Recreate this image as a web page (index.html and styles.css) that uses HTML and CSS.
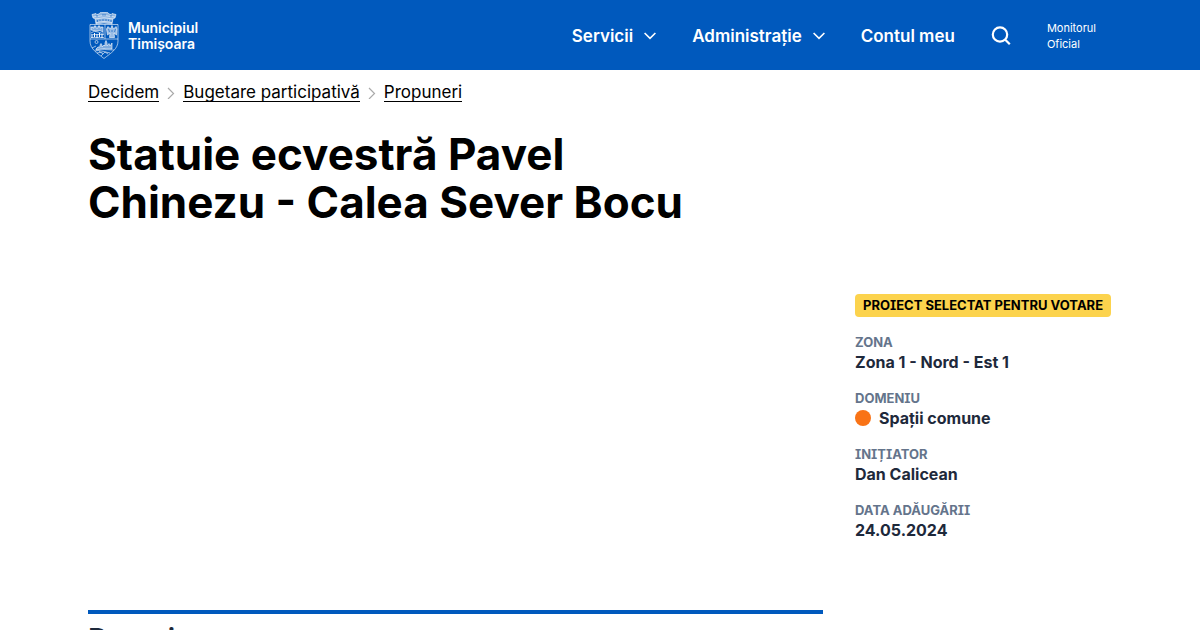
FILE: index.html
```html
<!DOCTYPE html>
<html lang="ro">

<head>
    <meta charset="utf-8">
    <meta name="viewport" content="width=device-width, initial-scale=1">
    <title>Statuie ecvestră Pavel Chinezu - Calea Sever Bocu</title>
    <link rel="stylesheet" href="styles.css">
</head>

<body>
    <header class="site-header">
        <div class="container header-inner">
            <a class="brand" href="#">
                <svg class="crest" width="32" height="48" viewBox="0 0 32 48" fill="none" stroke="currentColor" stroke-width="0.6" aria-hidden="true">
                    <!-- mural crown -->
                    <path fill="currentColor" fill-opacity="0.55" d="M8 12 L7 6.500 L5 6 L4 2.500 L8 1.500 L9 2.500 L11 2 L12 .7 Q16 0 20 .7 L21 2 L23 2.500 L24 1.500 L28 2.500 L27 6 L25 6.500 L24 12 Q16 10 8 12Z" />
                    <path d="M5 5 Q16 2 27 5 M7 7 Q16 4.500 25 7 M8 10.500 Q16 8.500 24 10.500" />
                    <path stroke="#0059bd" d="M9.500 8 V10 M12 7.500 V9 M15 7 V9 M18 7 V9 M20.500 7.500 V9 M23 8 V10 M8 4 H10 M14 3 H18 M22 4 H24" />
                    <!-- shield -->
                    <path d="M2 12.500 H30 V29 C30 37 23 41 16 46.500 C9 41 2 37 2 29Z" />
                    <path d="M2 27 H30 M17 12.500 V27" />
                    <!-- fortress and bridge -->
                    <path fill="currentColor" fill-opacity="0.5" d="M3 18 V15 H5 V16 H6 V14 H8 V16 H10 V14 H12 V16 H13 V15 H15 V20 L12 18.500 L8 19 L3 18Z" />
                    <path d="M3 21 Q6 18 10 20 T16 21 M3 22.500 H16 M3 25.500 H16" />
                    <path stroke-width="1" d="M4 23 V26 M6.500 21 V25 M9 22 V26 M11.500 21 V25 M14 22 V26" />
                    <!-- winged figure -->
                    <path fill="currentColor" fill-opacity="0.6" d="M18.500 17 L20 14.500 L22.500 17 L24 13.500 L25.500 17 L28 14.500 L29 17 L28.500 23 L26 21 L26.500 25.500 H21.500 L22 21 L19.500 23Z" />
                    <path stroke="#0059bd" d="M20.500 17 L21.500 20 M27.500 17 L26.500 20 M24 18 V20" />
                    <!-- sun, town and river -->
                    <circle cx="8.500" cy="30" r="1.500" />
                    <path fill="currentColor" fill-opacity="0.5" d="M8 37 L10 35 H12 V33 L13 31.500 L14 33 V35 L16 33 L17 34 V31 L18 28.500 L19 31 V34 L21 31.500 L22 34 L24 31 V37 Q16 35.500 8 38Z" />
                    <path d="M4 36 L8 34 M7 39 Q16 36.500 26 38 M9 41 Q16 38 22 41 M13 44 L17 40 L20 42 M11 39 L15 42" />
                </svg>
                <span>Municipiul<br>Timișoara</span>
            </a>
            <nav class="main-nav">
                <button class="nav-item" type="button">Servicii
                    <svg width="12" height="8" viewBox="0 0 12 8" fill="none" stroke="currentColor" stroke-width="1.600" aria-hidden="true"><path d="M.6 1 L6 6.400 L11.400 1" /></svg>
                </button>
                <button class="nav-item" type="button">Administrație
                    <svg width="12" height="8" viewBox="0 0 12 8" fill="none" stroke="currentColor" stroke-width="1.600" aria-hidden="true"><path d="M.6 1 L6 6.400 L11.400 1" /></svg>
                </button>
                <a class="nav-item" href="#">Contul meu</a>
                <button class="nav-item" type="button" aria-label="Caută">
                    <svg width="20" height="20" viewBox="0 0 20 20" fill="none" stroke="currentColor" stroke-width="2.200" aria-hidden="true"><circle cx="9" cy="8.500" r="7.200" /><path d="M14 13.500 L18.800 18.300" /></svg>
                </button>
                <a class="monitor" href="#">Monitorul<br>Oficial</a>
            </nav>
        </div>
    </header>

    <div class="container">
        <nav class="breadcrumbs">
            <a href="#">Decidem</a>
            <svg width="8" height="12" viewBox="0 0 8 12" fill="none" stroke="currentColor" stroke-width="1.200" aria-hidden="true"><path d="M1 1 L6.500 6.500 L1 12" /></svg>
            <a href="#">Bugetare participativă</a>
            <svg width="8" height="12" viewBox="0 0 8 12" fill="none" stroke="currentColor" stroke-width="1.200" aria-hidden="true"><path d="M1 1 L6.500 6.500 L1 12" /></svg>
            <a href="#">Propuneri</a>
        </nav>

        <h1>Statuie ecvestră Pavel Chinezu - Calea Sever Bocu</h1>

        <div class="project">
            <main>
                <div class="map"></div>
                <section class="description">
                    <h2>Descriere</h2>
                </section>
            </main>
            <aside>
                <span class="badge">Proiect selectat pentru votare</span>
                <dl class="details">
                    <div>
                        <dt>Zona</dt>
                        <dd>Zona 1 - Nord - Est 1</dd>
                    </div>
                    <div>
                        <dt>Domeniu</dt>
                        <dd><span class="dot"></span>Spații comune</dd>
                    </div>
                    <div>
                        <dt>Inițiator</dt>
                        <dd>Dan Calicean</dd>
                    </div>
                    <div>
                        <dt>Data adăugării</dt>
                        <dd>24.05.2024</dd>
                    </div>
                </dl>
            </aside>
        </div>
    </div>
</body>

</html>
```
FILE: styles.css
```css
* {
    box-sizing: border-box;
}

body {
    margin: 0;
    font-family: Inter, sans-serif;
    color: #000;
    background: #fff;
}

a {
    color: inherit;
}

.container {
    max-width: 1024px;
    margin: 0 auto;
}

.site-header {
    background: #0059bd;
    color: #fff;
}

.header-inner {
    display: flex;
    justify-content: space-between;
    align-items: center;
    min-height: 70px;
    padding-top: 2px;
}

.brand {
    display: flex;
    align-items: center;
    gap: 8px;
    font-size: 14px;
    line-height: 16px;
    font-weight: 600;
    text-decoration: none;
}

.main-nav {
    display: flex;
    align-items: center;
    gap: 36px;
    padding-right: 16px;
}

.nav-item {
    display: flex;
    align-items: center;
    gap: 11px;
    padding: 0;
    border: 0;
    background: none;
    color: inherit;
    font: 600 17px/24px Inter, sans-serif;
    text-decoration: none;
}

.monitor {
    font-size: 11px;
    line-height: 16px;
    font-weight: 400;
    text-decoration: none;
}

.breadcrumbs {
    display: flex;
    align-items: center;
    gap: 8px;
    padding-top: 13px;
    font-size: 17px;
    line-height: 18px;
    color: #aaa;
}

.breadcrumbs a {
    color: #000;
    text-decoration: none;
    border-bottom: 1px solid #000;
}

h1 {
    max-width: 640px;
    margin: 28px 0 0;
    font-size: 44px;
    line-height: 48px;
    font-weight: 700;
}

.project {
    display: grid;
    grid-template-columns: 1fr 257px;
    gap: 32px;
    padding-top: 68px;
}

.map {
    height: 316px;
}

.description {
    border-top: 4px solid #0059bd;
    padding-top: 7px;
    color: #1e293b;
}

.description h2 {
    margin: 0;
    font-size: 28px;
    line-height: 36px;
    font-weight: 600;
}

.badge {
    display: inline-block;
    padding: 4px 8px;
    border-radius: 4px;
    background: #fcd34d;
    font-size: 13px;
    line-height: 15px;
    font-weight: 700;
    font-feature-settings: "cv08";
    text-transform: uppercase;
    white-space: nowrap;
}

.details {
    display: grid;
    gap: 16px;
    margin: 17px 0 0;
    font-weight: 700;
}

.details dt {
    font-size: 13px;
    line-height: 16px;
    color: #64748b;
    font-feature-settings: "cv08";
    text-transform: uppercase;
}

.details dd {
    display: flex;
    align-items: center;
    gap: 8px;
    margin: 0;
    font-size: 16px;
    line-height: 24px;
    color: #1e293b;
}

.dot {
    width: 16px;
    height: 16px;
    border-radius: 50%;
    background: #f97316;
}
```
